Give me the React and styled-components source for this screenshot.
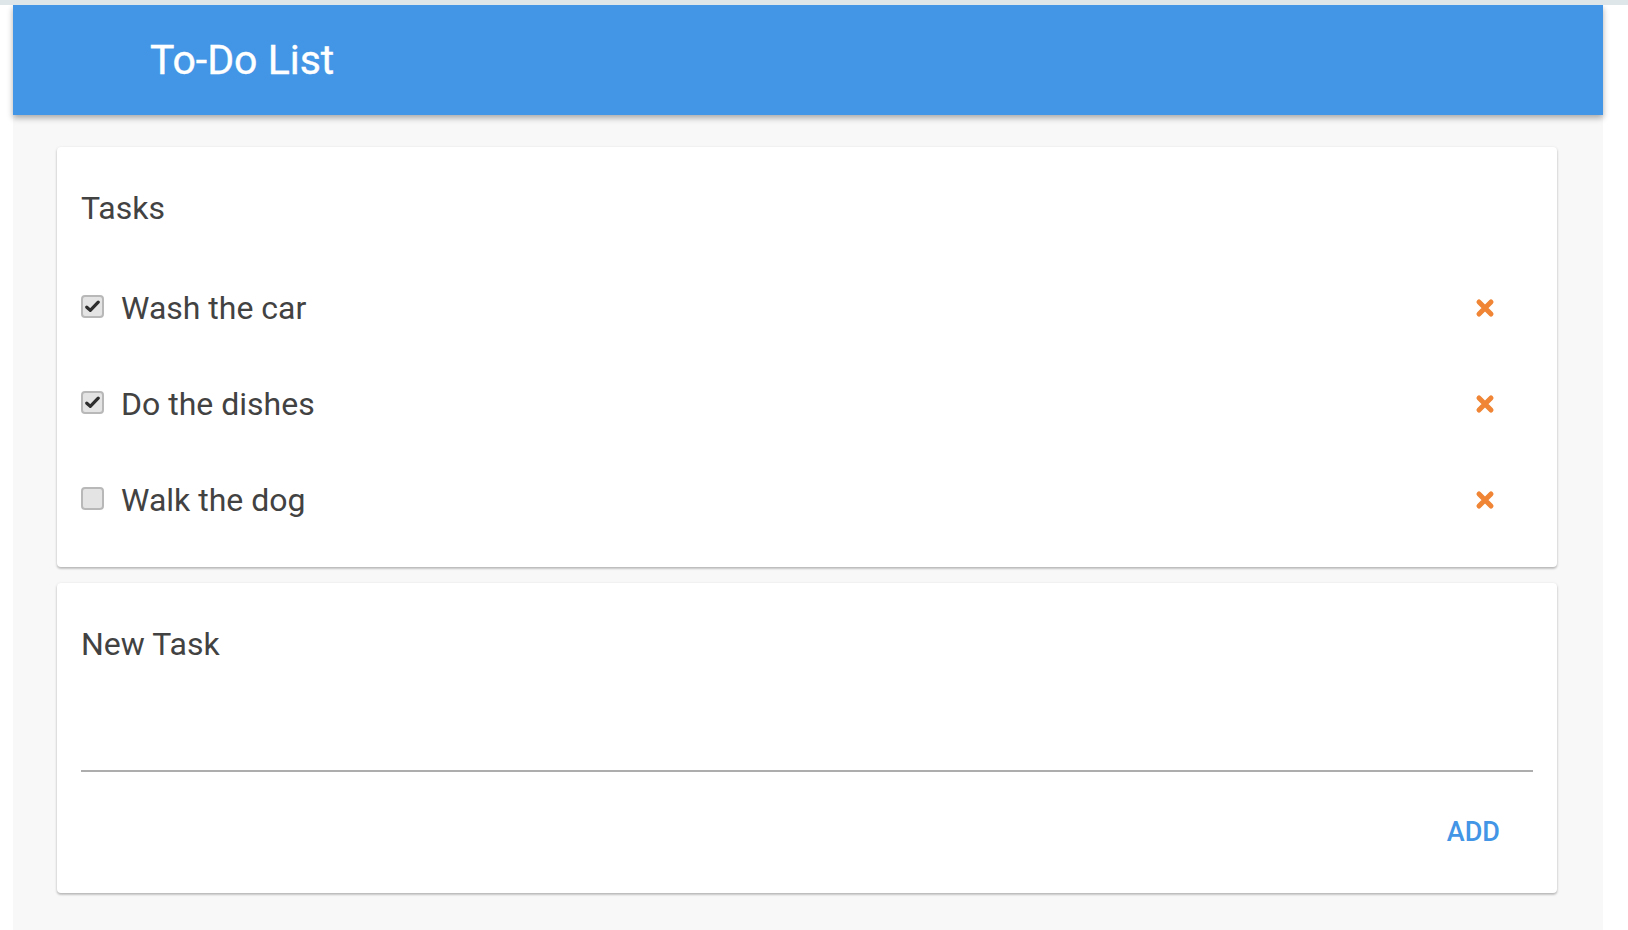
import React, { useState } from "react";
import styled, { createGlobalStyle } from "styled-components";

const GlobalStyle = createGlobalStyle`
  html, body {
    margin: 0;
    padding: 0;
    background: #ffffff;
    font-family: Roboto, "Liberation Sans", Arial, sans-serif;
  }
  * {
    box-sizing: border-box;
  }
`

const Frame = styled.div`
  border-top: 5px solid #dfe6e9;
  padding: 0 25px 0 13px;
  height: 930px;
  overflow: hidden;
`

const AppShell = styled.div`
  background: #f8f8f8;
  height: 925px;
`

const Header = styled.header`
  height: 110px;
  background: #4395e5;
  display: flex;
  align-items: center;
  padding-left: 137px;
  box-shadow: 0 3px 6px rgba(0, 0, 0, 0.32);
  position: relative;

  h1 {
    margin: 0;
    color: #ffffff;
    font-size: 41px;
    font-weight: 400;
    line-height: 1;
    -webkit-text-stroke: 0.4px #ffffff;
  }
`

const Main = styled.main`
  display: flex;
  flex-direction: column;
  gap: 16px;
  padding: 32px 46px 0 44px;
`

const Card = styled.section`
  background: #ffffff;
  border-radius: 4px;
  box-shadow: 0 1px 3px rgba(0, 0, 0, 0.2), 0 2px 2px rgba(0, 0, 0, 0.12);
  padding: 43px 24px ${(props) => props.$bottom || 24}px;
`

const Title = styled.h2`
  margin: 0;
  font-size: 32px;
  font-weight: 400;
  line-height: 36px;
  color: #424242;
`

const List = styled.ul`
  list-style: none;
  margin: 34px 0 0;
  padding: 0;
`

const Row = styled.li`
  height: 96px;
  display: flex;
  align-items: center;
`

const Box = styled.span`
  width: 23px;
  height: 23px;
  flex: none;
  margin-bottom: 4px;
  border: 2px solid #b8b8b8;
  border-radius: 4px;
  background: #e4e4e4;
  display: flex;
  align-items: center;
  justify-content: center;
  cursor: pointer;
`

const Label = styled.span`
  flex: 1;
  margin-left: 17px;
  font-size: 32px;
  color: #424242;
`

const DeleteButton = styled.button`
  border: none;
  background: transparent;
  padding: 14px;
  margin-right: 24px;
  display: flex;
  cursor: pointer;
`

const Input = styled.input`
  display: block;
  width: 100%;
  height: 48px;
  margin-top: 62px;
  border: none;
  border-bottom: 2px solid #adadad;
  font-size: 28px;
  font-family: inherit;
  outline: none;
  background: transparent;
`

const Actions = styled.div`
  display: flex;
  justify-content: flex-end;
  margin-top: 42px;
`

const AddButton = styled.button`
  height: 36px;
  padding: 0 16px;
  margin-right: 17px;
  border: none;
  background: transparent;
  color: #4395e5;
  font-family: inherit;
  font-size: 27px;
  font-weight: 500;
  cursor: pointer;
`

const Check = ({ checked, onClick }) => (
  <Box onClick={onClick}>
    {checked && (
      <svg width="15" height="13" viewBox="0 0 15 13">
        <path
          d="M1.8 7.2 L5.3 10.4 L13.2 2.2"
          fill="none"
          stroke="#2e2e2e"
          strokeWidth="3.2"
          strokeLinecap="round"
          strokeLinejoin="round"
        />
      </svg>
    )}
  </Box>
)

const Cross = () => (
  <svg width="20" height="20" viewBox="0 0 20 20">
    <path
      d="M4 4 L16 16 M16 4 L4 16"
      stroke="#ef8535"
      strokeWidth="5"
      strokeLinecap="round"
    />
  </svg>
)

const initial = [
  { id: 1, text: "Wash the car", done: true },
  { id: 2, text: "Do the dishes", done: true },
  { id: 3, text: "Walk the dog", done: false },
]

const App = () => {
  const [tasks, setTasks] = useState(initial)
  const [newTask, setNewTask] = useState("")

  const toggle = (id) =>
    setTasks(tasks.map((t) => (t.id === id ? { ...t, done: !t.done } : t)))

  const remove = (id) => setTasks(tasks.filter((t) => t.id !== id))

  const add = () => {
    if (!newTask) return
    setTasks([...tasks, { id: Date.now(), text: newTask, done: false }])
    setNewTask("")
  }

  return (
    <>
      <GlobalStyle />
      <Frame>
        <AppShell>
          <Header>
            <h1>To-Do List</h1>
          </Header>
          <Main>
            <Card $bottom={19}>
              <Title>Tasks</Title>
              <List>
                {tasks.map((task) => (
                  <Row key={task.id}>
                    <Check checked={task.done} onClick={() => toggle(task.id)} />
                    <Label>{task.text}</Label>
                    <DeleteButton type="button" onClick={() => remove(task.id)}>
                      <Cross />
                    </DeleteButton>
                  </Row>
                ))}
              </List>
            </Card>
            <Card $bottom={43}>
              <Title>New Task</Title>
              <Input
                value={newTask}
                onChange={(event) => setNewTask(event.target.value)}
              />
              <Actions>
                <AddButton type="button" onClick={add}>ADD</AddButton>
              </Actions>
            </Card>
          </Main>
        </AppShell>
      </Frame>
    </>
  )
}

export default App
